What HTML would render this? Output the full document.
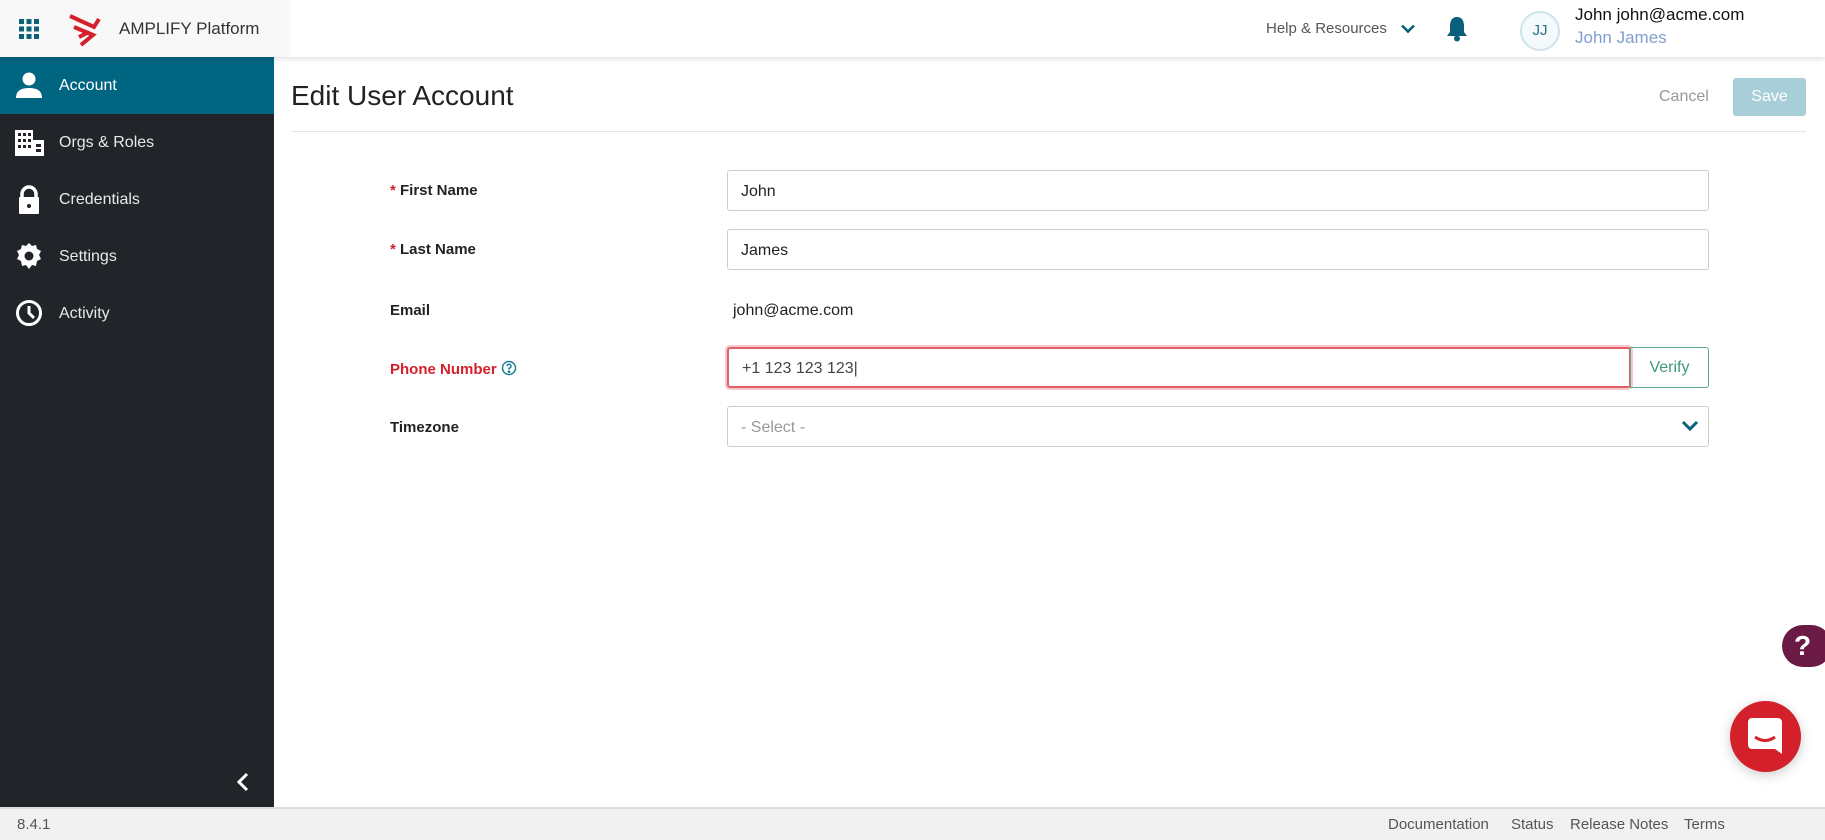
<!DOCTYPE html>
<html><head><meta charset="utf-8"><style>
*{box-sizing:border-box;margin:0;padding:0}
body{width:1825px;height:840px;overflow:hidden;background:#fff;font-family:"Liberation Sans",sans-serif;color:#212529;position:relative}
.abs{position:absolute}
.top{left:0;top:0;width:1825px;height:57px;background:#fff;box-shadow:0 2px 5px rgba(0,0,0,.12);z-index:2}
.logoarea{left:0;top:0;width:290px;height:57px;background:#f8f8f8}
.side{left:0;top:57px;width:274px;height:750px;background:#212529}
.item{position:absolute;left:0;width:274px;height:57px;color:#e8e8e8;font-size:16px;line-height:57px;padding-left:59px}
.item svg{position:absolute;left:15px;top:14px}
.lbl{position:absolute;left:390px;font-size:15px;font-weight:bold;color:#222}
.inp{position:absolute;left:727px;width:982px;height:41px;border:1px solid #ccc;border-radius:3px;font-size:16px;line-height:39px;padding-left:13px;color:#222}
.foot{left:0;top:807px;width:1825px;height:33px;background:#f1f1f1;border-top:2px solid #ddd;font-size:15px;color:#555}
.foot span{position:absolute;top:7px}
</style></head><body>
<div class="abs top">
 <div class="abs logoarea"></div>
 <svg class="abs" style="left:19px;top:19px" width="20" height="20" viewBox="0 0 20 20" fill="#0a5f7a"><rect x="0" y="0" width="5" height="5"/><rect x="7.5" y="0" width="5" height="5"/><rect x="15" y="0" width="5" height="5"/><rect x="0" y="7.5" width="5" height="5"/><rect x="7.5" y="7.5" width="5" height="5"/><rect x="15" y="7.5" width="5" height="5"/><rect x="0" y="15" width="5" height="5"/><rect x="7.5" y="15" width="5" height="5"/><rect x="15" y="15" width="5" height="5"/></svg>
 <svg class="abs" style="left:69px;top:13px" width="36" height="34" viewBox="0 0 36 34" fill="none" stroke="#d3202a" stroke-width="4"><path d="M1 3 L25 14 L30 6"/><path d="M5 14 L24 22 L12 32"/><path d="M10 24 L20 19"/></svg>
 <div class="abs" style="left:119px;top:19px;font-size:17px;color:#333">AMPLIFY Platform</div>
 <div class="abs" style="left:1266px;top:20px;font-size:15px;color:#555">Help &amp; Resources</div>
 <svg class="abs" style="left:1401px;top:24px" width="14" height="10" viewBox="0 0 14 10"><path d="M1 1.5 L7 7.5 L13 1.5" stroke="#0a5f7a" stroke-width="2.6" fill="none"/></svg>
 <svg class="abs" style="left:1446px;top:16px" width="22" height="26" viewBox="0 0 22 26" fill="#0a5f7a"><path d="M11 1 C6 1 4 5 4 10 V16 L1 20 H21 L18 16 V10 C18 5 16 1 11 1Z"/><circle cx="11" cy="22.5" r="3"/></svg>
 <div class="abs" style="left:1520px;top:11px;width:40px;height:40px;border-radius:50%;border:2px solid #cde3ea;background:#f4f9fb;text-align:center;line-height:36px;font-size:15px;color:#2a6f86">JJ</div>
 <div class="abs" style="left:1575px;top:5px;font-size:17px;color:#111">John john@acme.com</div>
 <div class="abs" style="left:1575px;top:28px;font-size:17px;color:#7f9fcf">John James</div>
</div>
<div class="abs side">
 <div class="item" style="top:0;background:#006580;color:#fff"><svg width="28" height="28" viewBox="0 0 28 28" fill="#fff"><circle cx="14" cy="8" r="6.5"/><path d="M1 27 C1 19 7 17 14 17 C21 17 27 19 27 27Z"/></svg>Account</div>
 <div class="item" style="top:57px"><svg width="30" height="28" viewBox="0 0 30 28" fill="#fff"><path d="M0 2 H18 V28 H0Z M18 12 H29 V28 H18Z"/><g fill="#212529"><rect x="3" y="5" width="3" height="3"/><rect x="8" y="5" width="3" height="3"/><rect x="13" y="5" width="3" height="3"/><rect x="3" y="11" width="3" height="3"/><rect x="8" y="11" width="3" height="3"/><rect x="13" y="11" width="3" height="3"/><rect x="3" y="17" width="3" height="3"/><rect x="8" y="17" width="3" height="3"/><rect x="13" y="17" width="3" height="3"/><rect x="21" y="16" width="5" height="3"/><rect x="21" y="21" width="5" height="3"/></g></svg>Orgs &amp; Roles</div>
 <div class="item" style="top:114px"><svg width="28" height="30" viewBox="0 0 28 30" fill="#fff"><path d="M7 13 V9 A7 7 0 0 1 21 9 V13" stroke="#fff" stroke-width="3.5" fill="none"/><rect x="4" y="12" width="20" height="17" rx="1"/><circle cx="14" cy="21" r="2" fill="#212529"/></svg>Credentials</div>
 <div class="item" style="top:171px"><svg width="28" height="28" viewBox="0 0 28 28"><path d="M14 1 L17 4 L21 3 L22 7 L26 9 L24 13 L26 17 L22 19 L21 24 L17 23 L14 27 L11 23 L7 24 L6 19 L2 17 L4 13 L2 9 L6 7 L7 3 L11 4Z" fill="#fff"/><circle cx="14" cy="14" r="4.5" fill="#212529"/></svg>Settings</div>
 <div class="item" style="top:228px"><svg width="28" height="28" viewBox="0 0 28 28" fill="none" stroke="#fff" stroke-width="3"><circle cx="14" cy="14" r="11.5"/><path d="M14 7 V14 L19 19"/></svg>Activity</div>
 <svg class="abs" style="left:236px;top:715px" width="14" height="20" viewBox="0 0 14 20"><path d="M11 2 L3 10 L11 18" stroke="#fff" stroke-width="3" fill="none"/></svg>
</div>
<div class="abs" style="left:291px;top:80px;font-size:28px;color:#222">Edit User Account</div>
<div class="abs" style="left:291px;top:131px;width:1515px;height:1px;background:#e6e6e6"></div>
<div class="abs" style="left:1659px;top:88px;font-size:16px;color:#999">Cancel</div>
<div class="abs" style="left:1733px;top:78px;width:73px;height:38px;background:#a8ced8;border-radius:3px;color:#fff;font-size:16px;text-align:center;line-height:38px">Save</div>
<div class="lbl" style="top:182px"><span style="color:#d3202a">*</span> First Name</div>
<div class="lbl" style="top:241px"><span style="color:#d3202a">*</span> Last Name</div>
<div class="lbl" style="top:302px">Email</div>
<div class="lbl" style="top:360px;color:#d3202a">Phone Number <svg style="vertical-align:-2px" width="16" height="16" viewBox="0 0 16 16" fill="none" stroke="#1c7f9a" stroke-width="1.5"><circle cx="8" cy="8" r="6.5"/><path d="M6 6.2 A2 2 0 1 1 8 8.2 V9.5"/><circle cx="8" cy="11.7" r=".6" fill="#1c7f9a"/></svg></div>
<div class="lbl" style="top:419px">Timezone</div>
<div class="inp" style="top:170px;line-height:42px">John</div>
<div class="inp" style="top:229px;line-height:42px">James</div>
<div class="abs" style="left:733px;top:302px;font-size:16px;color:#222">john@acme.com</div>
<div class="inp" style="top:347px;width:904px;border:2px solid #e0606a;box-shadow:0 0 0 2px #f5c9cc;line-height:40px;color:#444">+1 123 123 123|</div>
<div class="abs" style="left:1630px;top:347px;width:79px;height:41px;border:1px solid #5aa98a;border-radius:0 3px 3px 0;color:#3f9a77;font-size:16px;text-align:center;line-height:39px">Verify</div>
<div class="inp" style="top:406px;color:#999;line-height:42px">- Select -</div>
<svg class="abs" style="left:1681px;top:420px" width="18" height="12" viewBox="0 0 18 12"><path d="M2 2 L9 9 L16 2" stroke="#0a5f7a" stroke-width="3" fill="none"/></svg>
<div class="abs" style="left:1782px;top:625px;width:50px;height:42px;border-radius:21px;background:#6b1a45;color:#fff;font-weight:bold;font-size:28px;line-height:42px;padding-left:12px">?</div>
<div class="abs" style="left:1730px;top:701px;width:71px;height:71px;border-radius:50%;background:#d3202a;box-shadow:0 3px 12px rgba(0,0,0,.2)"></div>
<svg class="abs" style="left:1748px;top:718px" width="35" height="37" viewBox="0 0 35 37"><path d="M4 0 H30 A4 4 0 0 1 34 4 V36 L27 31 H4 A4 4 0 0 1 0 27 V4 A4 4 0 0 1 4 0Z" fill="#fff"/><path d="M7 19 Q17 26 27 19" stroke="#d3202a" stroke-width="3" fill="none"/></svg>
<div class="abs foot"><span style="left:17px">8.4.1</span><span style="left:1388px">Documentation</span><span style="left:1511px">Status</span><span style="left:1570px">Release Notes</span><span style="left:1684px">Terms</span></div>
</body></html>
